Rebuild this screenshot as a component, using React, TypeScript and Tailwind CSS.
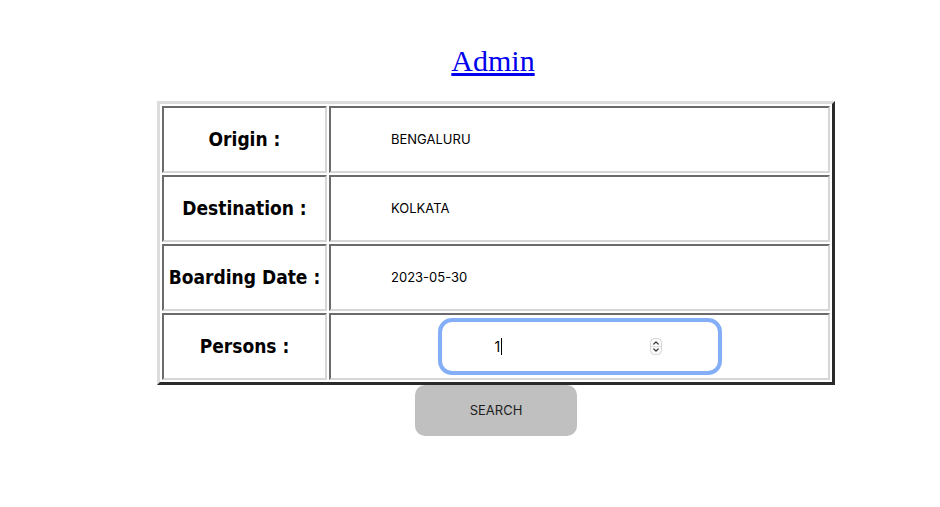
import React from 'react';

interface Row {
  label: string;
  value?: string;
}

const rows: Row[] = [
  { label: 'Origin :', value: 'BENGALURU' },
  { label: 'Destination :', value: 'KOLKATA' },
  { label: 'Boarding Date :', value: '2023-05-30' },
  { label: 'Persons :' },
];

const cellBorder =
  'border-2 border-t-[#6b6b6b] border-l-[#6b6b6b] border-r-[#d6d6d6] border-b-[#d6d6d6]';

function Stepper() {
  return (
    <svg width="12" height="17" viewBox="0 0 12 17" fill="none">
      <rect x="0.5" y="0.5" width="11" height="16" rx="4" fill="#fafafa" stroke="#d4d4d4" />
      <line x1="1" y1="8.5" x2="11" y2="8.5" stroke="#e2e2e2" />
      <path d="M3.8 6 L6 3.8 L8.2 6" stroke="#333" strokeWidth="1.2" strokeLinecap="round" strokeLinejoin="round" />
      <path d="M3.8 11 L6 13.2 L8.2 11" stroke="#333" strokeWidth="1.2" strokeLinecap="round" strokeLinejoin="round" />
    </svg>
  );
}

function PersonsInput() {
  // focused number field, drawn statically so the caret doesn't blink
  return (
    <div className="mx-auto flex h-[57px] w-[284px] items-center rounded-[14px] border-4 border-[#84aef6] bg-white">
      <div className="flex w-[208px] items-center pl-[53px]">
        <span className="text-[14px] text-black" style={{ fontFamily: 'Inter, sans-serif' }}>1</span>
        <span className="ml-[1px] h-[17px] w-px bg-black" />
      </div>
      <Stepper />
    </div>
  );
}

export default function App() {
  return (
    <div className="min-h-[507px] bg-white pl-[52px]">
      <div className="flex flex-col items-center">
        <a
          href="#"
          className="mt-[44px] mr-[6px] mb-[24px] text-[30px] leading-[33px] text-[#0000ee] underline"
          style={{ fontFamily: '"Liberation Serif", "Times New Roman", serif' }}
        >
          Admin
        </a>

        <table className="border-separate border-spacing-[2px] border-[3px] border-t-[#dcdcdc] border-l-[#dcdcdc] border-r-[#2a2a2a] border-b-[#2a2a2a]">
          <tbody>
            {rows.map((row) => (
              <tr key={row.label}>
                <td
                  className={`${cellBorder} h-[67px] w-[165px] p-0 text-center align-middle text-[19px] font-bold whitespace-nowrap text-black`}
                  style={{ fontFamily: '"DejaVu Sans Condensed", "DejaVu Sans", sans-serif', fontStretch: 'condensed' }}
                >
                  {row.label}
                </td>
                <td className={`${cellBorder} h-[67px] w-[501px] p-0 align-middle`}>
                  {row.value ? (
                    <div className="pl-[60px] text-[13px] text-black" style={{ fontFamily: 'Inter, sans-serif' }}>
                      {row.value}
                    </div>
                  ) : (
                    <PersonsInput />
                  )}
                </td>
              </tr>
            ))}
          </tbody>
        </table>

        <button
          className="h-[51px] w-[162px] rounded-[10px] bg-[#c0c0c0] text-[13px] text-[#1e1e1e]"
          style={{ fontFamily: 'Inter, sans-serif' }}
        >
          SEARCH
        </button>
      </div>
    </div>
  );
}
